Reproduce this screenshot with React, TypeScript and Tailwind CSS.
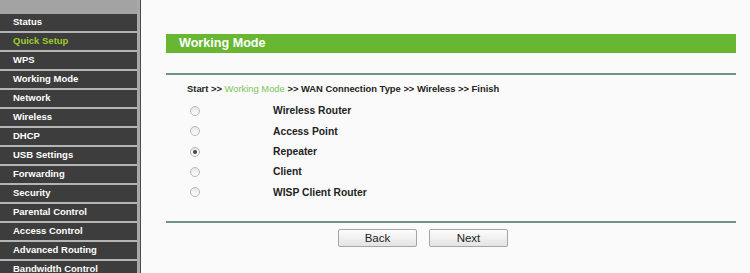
import React from 'react';

const menu = [
  'Status',
  'Quick Setup',
  'WPS',
  'Working Mode',
  'Network',
  'Wireless',
  'DHCP',
  'USB Settings',
  'Forwarding',
  'Security',
  'Parental Control',
  'Access Control',
  'Advanced Routing',
  'Bandwidth Control',
];

const modes = ['Wireless Router', 'Access Point', 'Repeater', 'Client', 'WISP Client Router'];

const Radio: React.FC<{ checked?: boolean }> = ({ checked }) => (
  <span className="w-[10px] h-[10px] rounded-full border border-[#b8b8b8] bg-gradient-to-b from-[#e6e6e6] to-[#fdfdfd] flex items-center justify-center">
    {checked && <span className="w-[4px] h-[4px] rounded-full bg-[#444]" />}
  </span>
);

export default function App() {
  return (
    <div className="w-[750px] h-[273px] overflow-hidden flex bg-[#fafafa] font-['Liberation_Sans',Arial,sans-serif]">
      {/* Sidebar */}
      <div className="w-[137px] shrink-0 flex flex-col bg-[#3d3d3d]">
        <div className="h-[14px] shrink-0 bg-[#a3a3a3]" />
        {menu.map((item) => (
          <div
            key={item}
            className={`h-[19px] shrink-0 pl-[13px] flex items-center border-b-2 border-[#b4b4b4] text-[9.5px] font-bold ${item === 'Quick Setup' ? 'text-[#9ccc2e]' : 'text-white'}`}
          >
            {item}
          </div>
        ))}
      </div>
      <div className="w-[3px] shrink-0 bg-[#a9a9a9]" />
      <div className="w-[1px] shrink-0 bg-[#4a4a4a]" />

      {/* Main */}
      <div className="flex-1 pl-[25px] pr-[14px] pt-[34px] flex flex-col">
        <div className="h-[19px] shrink-0 bg-[#67b733] flex items-center pl-[13px] text-white font-bold text-[12.6px]">
          Working Mode
        </div>
        <div className="mt-[20px] h-[2px] shrink-0 bg-[#6f9384]" />
        <div className="h-[20px] shrink-0 mt-[4px] pl-[21px] flex items-center text-[9.4px] font-bold text-[#222]">
          Start &gt;&gt;&nbsp;<span className="text-[#7cc45a] font-normal">Working Mode</span>&nbsp;&gt;&gt; WAN Connection Type &gt;&gt; Wireless &gt;&gt; Finish
        </div>
        <div className="mt-[2px] flex flex-col">
          {modes.map((m) => (
            <div key={m} className="h-[20.3px] shrink-0 flex items-center">
              <div className="w-[107px] pl-[24px] flex items-center">
                <Radio checked={m === 'Repeater'} />
              </div>
              <span className="text-[10.3px] font-bold text-[#222]">{m}</span>
            </div>
          ))}
        </div>
        <div className="mt-[19px] h-[2px] shrink-0 bg-[#6f9384]" />
        <div className="mt-[6px] pl-[172px] flex gap-[12px]">
          <button className="w-[79px] h-[18px] border border-[#a5a5a5] rounded-[2px] bg-gradient-to-b from-[#fdfdfd] to-[#e3e3e3] text-[11.5px] text-[#222] flex items-center justify-center">
            Back
          </button>
          <button className="w-[79px] h-[18px] border border-[#a5a5a5] rounded-[2px] bg-gradient-to-b from-[#fdfdfd] to-[#e3e3e3] text-[11.5px] text-[#222] flex items-center justify-center">
            Next
          </button>
        </div>
      </div>
    </div>
  );
}
